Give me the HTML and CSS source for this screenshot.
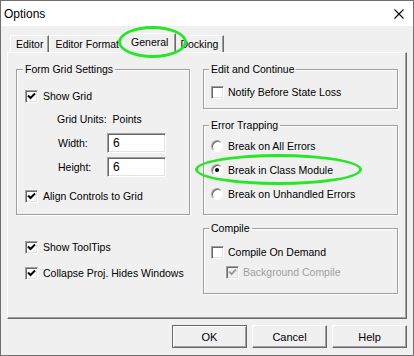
FILE: index.html
```html
<!DOCTYPE html>
<html>
<head>
    <title>Options</title>
    <link rel="stylesheet" href="styles.css">
</head>
<body>
    <div class="window">
        <div class="titlebar">
            <span class="title">Options</span>
            <svg class="close" width="10" height="10" viewBox="0 0 10 10">
                <path d="M0.5 0.5 L9.5 9.5 M9.5 0.5 L0.5 9.5" stroke="#000" stroke-width="1.1" fill="none"/>
            </svg>
        </div>

        <div class="client">
            <div class="tabs">
                <div class="tab">Editor</div>
                <div class="tab">Editor Format</div>
                <div class="tab active">General</div>
                <div class="tab">Docking</div>
            </div>

            <div class="panel">
                <div class="col">
                    <fieldset class="group grid-group">
                        <legend>Form Grid Settings</legend>
                        <div class="row first">
                            <span class="box"><svg width="9" height="9" viewBox="0 0 9 9"><path d="M1 3.5 L3.5 6 L8 1.5" stroke="#000" stroke-width="2" fill="none"/></svg></span>
                            Show Grid
                        </div>
                        <div class="row units">Grid Units:<span class="units-value">Points</span></div>
                        <div class="row field-row">
                            <span class="field-label">Width:</span>
                            <input class="field" type="text" value="6" readonly>
                        </div>
                        <div class="row field-row second">
                            <span class="field-label">Height:</span>
                            <input class="field" type="text" value="6" readonly>
                        </div>
                        <div class="row align">
                            <span class="box"><svg width="9" height="9" viewBox="0 0 9 9"><path d="M1 3.5 L3.5 6 L8 1.5" stroke="#000" stroke-width="2" fill="none"/></svg></span>
                            Align Controls to Grid
                        </div>
                    </fieldset>

                    <div class="loose">
                        <div class="row tooltips">
                            <span class="box"><svg width="9" height="9" viewBox="0 0 9 9"><path d="M1 3.5 L3.5 6 L8 1.5" stroke="#000" stroke-width="2" fill="none"/></svg></span>
                            Show ToolTips
                        </div>
                        <div class="row collapse">
                            <span class="box"><svg width="9" height="9" viewBox="0 0 9 9"><path d="M1 3.5 L3.5 6 L8 1.5" stroke="#000" stroke-width="2" fill="none"/></svg></span>
                            Collapse Proj. Hides Windows
                        </div>
                    </div>
                </div>

                <div class="col">
                    <fieldset class="group edit-group">
                        <legend>Edit and Continue</legend>
                        <div class="row first">
                            <span class="box small-gap"></span>
                            Notify Before State Loss
                        </div>
                    </fieldset>

                    <fieldset class="group error-group">
                        <legend>Error Trapping</legend>
                        <div class="row first"><span class="radio"></span>Break on All Errors</div>
                        <div class="row next"><span class="radio checked"></span>Break in Class Module</div>
                        <div class="row next"><span class="radio"></span>Break on Unhandled Errors</div>
                    </fieldset>

                    <fieldset class="group compile-group">
                        <legend>Compile</legend>
                        <div class="row first">
                            <span class="box small-gap"></span>
                            Compile On Demand
                        </div>
                        <div class="row disabled">
                            <span class="box small-gap"><svg width="9" height="9" viewBox="0 0 9 9"><path d="M1 3.5 L3.5 6 L8 1.5" stroke="#a0a0a0" stroke-width="2" fill="none"/></svg></span>
                            Background Compile
                        </div>
                    </fieldset>
                </div>
            </div>

            <div class="buttons">
                <button class="default">OK</button>
                <button>Cancel</button>
                <button>Help</button>
            </div>
        </div>

        <!-- highlight marks drawn over the dialog -->
        <div class="mark mark-tab"></div>
        <div class="mark mark-radio"></div>
    </div>
</body>
</html>
```

FILE: styles.css
```css
body {
    margin: 0;
    font-family: "Liberation Sans", Arial, sans-serif;
    font-size: 10.5px;
    color: #000;
}

.window {
    position: relative;
    width: 414px;
    height: 356px;
    box-sizing: border-box;
    border: 1px solid #707070;
    background-color: #f0f0f0;
    overflow: hidden;
}

.titlebar {
    height: 25px;
    background-color: #fff;
    display: flex;
    align-items: center;
    justify-content: space-between;
    padding: 0 9px 0 3px;
}

.title {
    font-size: 12px;
}

.client {
    padding: 7px 6px 0;
}

/* tabs */
.tabs {
    display: flex;
    align-items: flex-end;
    height: 19px;
    padding-left: 3px;
    position: relative;
    z-index: 1;
}

.tab {
    height: 17px;
    box-sizing: border-box;
    padding: 0 5px;
    line-height: 17px;
    border-top: 1px solid #fff;
    border-left: 1px solid #fff;
    border-right: 1px solid #696969;
    box-shadow: inset -1px 0 #a0a0a0;
    background-color: #f0f0f0;
}

.tab.active {
    position: relative;
    height: 20px;
    margin: 0 -2px -1px;
    padding: 0 7px;
    line-height: 17px;
    z-index: 2;
}

.panel {
    height: 267px;
    box-sizing: border-box;
    border: 1px solid;
    border-color: #fff #696969 #696969 #fff;
    box-shadow: inset -1px -1px #a0a0a0;
    display: grid;
    grid-template-columns: 174px 195px;
    column-gap: 13px;
    align-items: start;
    padding: 9px 0 0 8px;
}

/* group boxes */
.group {
    margin: 0;
    min-width: 0;
    padding: 0 0 0 8px;
    border: 1px solid #a0a0a0;
    box-shadow: 1px 1px #fff, inset 1px 1px #fff;
}

.group legend {
    margin-left: -2px;
    padding: 0 2px;
    line-height: 14px;
    background-color: #f0f0f0;
}

.grid-group {
    padding-bottom: 10px;
}

.edit-group,
.error-group,
.compile-group {
    padding-left: 7px;
}

.edit-group {
    padding-bottom: 8px;
}

.error-group {
    margin-top: 9px;
    padding-bottom: 12px;
}

.compile-group {
    margin-top: 6px;
    padding-bottom: 13px;
}

.row {
    display: flex;
    align-items: center;
    height: 16px;
    white-space: nowrap;
}

.grid-group .first { margin-top: 12px; }
.grid-group .units { margin-top: 7px; padding-left: 32px; }
.grid-group .field-row { margin-top: 6px; height: 20px; }
.grid-group .field-row.second { margin-top: 4px; }
.grid-group .align { margin-top: 11px; }

.units-value {
    margin-left: 6px;
}

.field-label {
    width: 49px;
    padding-left: 33px;
}

.field {
    width: 59px;
    height: 20px;
    box-sizing: border-box;
    margin: 0;
    padding: 0 0 0 5px;
    font-family: inherit;
    font-size: 12px;
    border: 1px solid;
    border-color: #a0a0a0 #fff #fff #a0a0a0;
    box-shadow: inset 1px 1px #696969, inset -1px -1px #e3e3e3;
    background-color: #fff;
    outline: none;
}

.loose {
    padding-left: 9px;
}

.loose .tooltips { margin-top: 24px; }
.loose .collapse { margin-top: 10px; }

.edit-group .first { margin-top: 8px; }
.error-group .first { margin-top: 6px; }
.error-group .next { margin-top: 8px; }
.compile-group .first { margin-top: 9px; }
.compile-group .disabled { margin-top: 4px; padding-left: 15px; color: #a0a0a0; }

/* check boxes and radio buttons */
.box {
    width: 11px;
    height: 11px;
    margin-right: 5px;
    flex-shrink: 0;
    display: flex;
    align-items: center;
    justify-content: center;
    border: 1px solid;
    border-color: #a0a0a0 #fff #fff #a0a0a0;
    box-shadow: inset 1px 1px #696969, inset -1px -1px #e3e3e3;
    background-color: #fff;
}

.box.small-gap {
    margin-right: 4px;
}

.disabled .box {
    background-color: #f0f0f0;
}

.radio {
    width: 10px;
    height: 10px;
    margin-right: 5px;
    flex-shrink: 0;
    border-radius: 50%;
    border: 1px solid;
    border-color: #a0a0a0 #fff #fff #a0a0a0;
    box-shadow: inset 1px 1px #696969;
    background-color: #fff;
    display: flex;
    align-items: center;
    justify-content: center;
}

.radio.checked::after {
    content: "";
    width: 4px;
    height: 4px;
    border-radius: 50%;
    background-color: #000;
}

/* dialog buttons */
.buttons {
    display: flex;
    justify-content: flex-end;
    gap: 5px;
    margin-top: 6px;
}

button {
    width: 75px;
    height: 23px;
    padding: 0;
    font-family: inherit;
    font-size: 11px;
    color: #000;
    background-color: #f0f0f0;
    border: 1px solid;
    border-color: #fff #696969 #696969 #fff;
    box-shadow: inset -1px -1px #a0a0a0;
}

button.default {
    border-color: #696969;
    box-shadow: inset 1px 1px #fff, inset -1px -1px #a0a0a0;
}

/* green annotation ellipses */
.mark {
    position: absolute;
    box-sizing: border-box;
    border: 3px solid #26e626;
    border-radius: 50%;
    z-index: 5;
}

.mark-tab {
    left: 117px;
    top: 25px;
    width: 69px;
    height: 32px;
}

.mark-radio {
    left: 194px;
    top: 153px;
    width: 167px;
    height: 31px;
}
```
